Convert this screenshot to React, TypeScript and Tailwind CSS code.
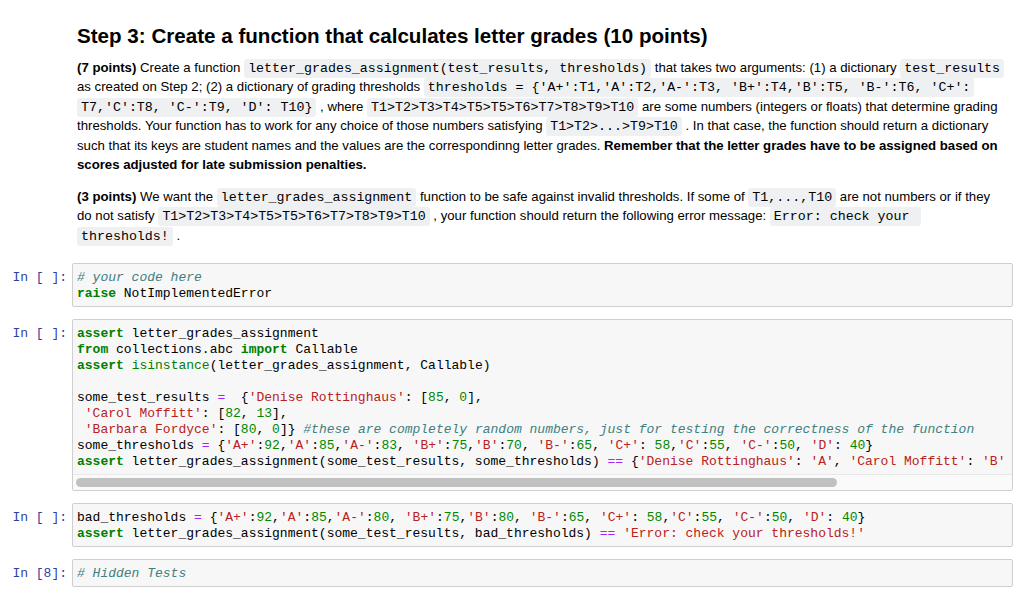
import React from "react";

const K = ({ children }: { children: React.ReactNode }) => (
  <span className="text-[#008000] font-bold">{children}</span>
);
const B = ({ children }: { children: React.ReactNode }) => (
  <span className="text-[#008000]">{children}</span>
);
const S = ({ children }: { children: React.ReactNode }) => (
  <span className="text-[#BA2121]">{children}</span>
);
const N = ({ children }: { children: React.ReactNode }) => (
  <span className="text-[#008800]">{children}</span>
);
const O = ({ children }: { children: React.ReactNode }) => (
  <span className="text-[#AA22FF]">{children}</span>
);
const C = ({ children }: { children: React.ReactNode }) => (
  <span className="text-[#408080] italic">{children}</span>
);

const Code = ({ children }: { children: React.ReactNode }) => (
  <code
    className="bg-[#eff0f1] px-[4px] py-[2px] rounded-[3px] whitespace-pre text-[13.3px] leading-none text-black"
    style={{ fontFamily: '"Liberation Mono", monospace' }}
  >
    {children}
  </code>
);

const Line = ({ children }: { children: React.ReactNode }) => (
  <div className="h-[19.4px] leading-[19.4px]">{children}</div>
);

const Cell = ({
  prompt,
  children,
  scroll,
}: {
  prompt: string;
  children: React.ReactNode;
  scroll?: boolean;
}) => (
  <div className="flex items-start">
    <div className="w-[72px] shrink-0 pr-[5px] pt-[7px] text-right text-[#303F9F] text-[13px] leading-[16px] whitespace-pre">
      {prompt}
    </div>
    <div className="w-[941px] border border-[#cfcfcf] bg-[#f7f7f7] rounded-[2px] overflow-hidden">
      <div className="pl-[4px] pt-[6px] pb-[4px] text-[13px] leading-[16px] text-black whitespace-pre">
        {children}
      </div>
      {scroll && (
        <div className="h-[16px] border-t border-[#e9e9e9] bg-[#fafafa] pt-[3px] pl-[3px]">
          <div className="h-[9px] w-[761px] rounded-full bg-[#c1c1c1]" />
        </div>
      )}
    </div>
  </div>
);

export default function App() {
  return (
    <div
      className="w-[1024px] h-[594px] overflow-hidden bg-white text-black"
      style={{ fontFamily: '"Liberation Sans", Arial, sans-serif' }}
    >
      <div className="pl-[77px] pt-[24px]">
        <h1 className="text-[20.6px] leading-[24px] font-bold whitespace-nowrap">
          Step 3: Create a function that calculates letter grades (10 points)
        </h1>
        <div className="mt-[10px] text-[13.2px] whitespace-nowrap">
          <Line>
            <b>(7 points)</b> Create a function{" "}
            <Code>letter_grades_assignment(test_results, thresholds)</Code> that
            takes two arguments: (1) a dictionary <Code>test_results</Code>
          </Line>
          <Line>
            as created on Step 2; (2) a dictionary of grading thresholds{" "}
            <Code>{"thresholds = {'A+':T1,'A':T2,'A-':T3, 'B+':T4,'B':T5, 'B-':T6, 'C+':"}</Code>
          </Line>
          <Line>
            <Code>{"T7,'C':T8, 'C-':T9, 'D': T10}"}</Code> , where{" "}
            <Code>T1&gt;T2&gt;T3&gt;T4&gt;T5&gt;T5&gt;T6&gt;T7&gt;T8&gt;T9&gt;T10</Code> are some
            numbers (integers or floats) that determine grading
          </Line>
          <Line>
            thresholds. Your function has to work for any choice of those numbers
            satisfying <Code>T1&gt;T2&gt;...&gt;T9&gt;T10</Code> . In that case, the
            function should return a dictionary
          </Line>
          <Line>
            such that its keys are student names and the values are the
            correspondinng letter grades.{" "}
            <b>Remember that the letter grades have to be assigned based on</b>
          </Line>
          <Line>
            <b>scores adjusted for late submission penalties.</b>
          </Line>
        </div>
        <div className="mt-[12.6px] text-[13.2px] whitespace-nowrap">
          <Line>
            <b>(3 points)</b> We want the <Code>letter_grades_assignment</Code>{" "}
            function to be safe against invalid thresholds. If some of{" "}
            <Code>T1,...,T10</Code> are not numbers or if they
          </Line>
          <Line>
            do not satisfy{" "}
            <Code>T1&gt;T2&gt;T3&gt;T4&gt;T5&gt;T5&gt;T6&gt;T7&gt;T8&gt;T9&gt;T10</Code> , your
            function should return the following error message:{" "}
            <Code>{"Error: check your "}</Code>
          </Line>
          <Line>
            <Code>thresholds!</Code> .
          </Line>
        </div>
      </div>

      <div
        className="mt-[17.8px] flex flex-col gap-[12px]"
        style={{ fontFamily: '"Liberation Mono", monospace' }}
      >
        <Cell prompt="In [ ]:">
          <div>
            <C># your code here</C>
          </div>
          <div>
            <K>raise</K> NotImplementedError
          </div>
        </Cell>

        <Cell prompt="In [ ]:" scroll>
          <div>
            <K>assert</K> letter_grades_assignment
          </div>
          <div>
            <K>from</K> collections.abc <K>import</K> Callable
          </div>
          <div>
            <K>assert</K> <B>isinstance</B>(letter_grades_assignment, Callable)
          </div>
          <div>{" "}</div>
          <div>
            some_test_results <O>=</O>{"  {"}
            <S>'Denise Rottinghaus'</S>: [<N>85</N>, <N>0</N>],
          </div>
          <div>
            {" "}
            <S>'Carol Moffitt'</S>: [<N>82</N>, <N>13</N>],
          </div>
          <div>
            {" "}
            <S>'Barbara Fordyce'</S>: [<N>80</N>, <N>0</N>]{"} "}
            <C>#these are completely random numbers, just for testing the correctness of the function</C>
          </div>
          <div>
            some_thresholds <O>=</O> {"{"}
            <S>'A+'</S>:<N>92</N>,<S>'A'</S>:<N>85</N>,<S>'A-'</S>:<N>83</N>, <S>'B+'</S>:<N>75</N>,
            <S>'B'</S>:<N>70</N>, <S>'B-'</S>:<N>65</N>, <S>'C+'</S>: <N>58</N>,<S>'C'</S>:<N>55</N>,{" "}
            <S>'C-'</S>:<N>50</N>, <S>'D'</S>: <N>40</N>
            {"}"}
          </div>
          <div>
            <K>assert</K> letter_grades_assignment(some_test_results, some_thresholds){" "}
            <O>==</O> {"{"}
            <S>'Denise Rottinghaus'</S>: <S>'A'</S>, <S>'Carol Moffitt'</S>: <S>'B'</S>
          </div>
        </Cell>

        <Cell prompt="In [ ]:">
          <div>
            bad_thresholds <O>=</O> {"{"}
            <S>'A+'</S>:<N>92</N>,<S>'A'</S>:<N>85</N>,<S>'A-'</S>:<N>80</N>, <S>'B+'</S>:<N>75</N>,
            <S>'B'</S>:<N>80</N>, <S>'B-'</S>:<N>65</N>, <S>'C+'</S>: <N>58</N>,<S>'C'</S>:<N>55</N>,{" "}
            <S>'C-'</S>:<N>50</N>, <S>'D'</S>: <N>40</N>
            {"}"}
          </div>
          <div>
            <K>assert</K> letter_grades_assignment(some_test_results, bad_thresholds){" "}
            <O>==</O> <S>'Error: check your thresholds!'</S>
          </div>
        </Cell>

        <Cell prompt="In [8]:">
          <div>
            <C># Hidden Tests</C>
          </div>
        </Cell>
      </div>
    </div>
  );
}
